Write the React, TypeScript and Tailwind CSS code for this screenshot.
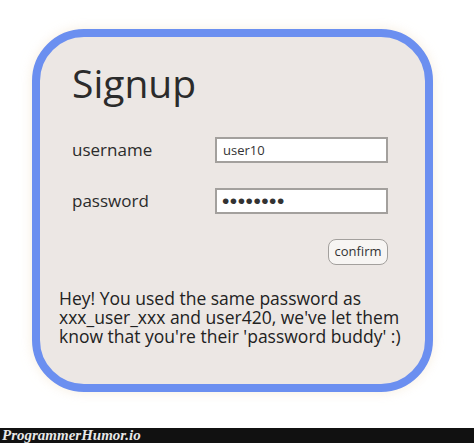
import { useState } from "react";

const font = { fontFamily: '"Open Sans", "Noto Sans", sans-serif' };

export default function App() {
  const [username, setUsername] = useState("user10");
  const [password, setPassword] = useState("hunter22");

  return (
    <div className="flex h-[443px] w-[474px] flex-col bg-white" style={font}>
      {/* Signup card */}
      <div className="ml-[32px] mt-[29px] h-[363px] w-[401px] rounded-[52px] border-[8px] border-[#6b8ff0] bg-[#ece7e4] shadow-[0_0_12px_rgba(240,225,200,0.6)]">
        <h1 className="ml-[32px] mt-[22px] text-[39px] leading-[48px] text-[#2b2b2b]">Signup</h1>

        <div className="mt-[30px] ml-[32px] flex flex-col gap-[25px]">
          <div className="flex h-[26px] items-center">
            <label className="w-[143px] text-[17px] text-[#2b2b2b]">username</label>
            <input
              value={username}
              onChange={(e) => setUsername(e.target.value)}
              className="h-[26px] w-[173px] border-2 border-[#a3a09d] bg-white px-[6px] text-[13px] text-[#333] outline-none"
            />
          </div>
          <div className="flex h-[26px] items-center">
            <label className="w-[143px] text-[17px] text-[#2b2b2b]">password</label>
            <input
              type="password"
              value={password}
              onChange={(e) => setPassword(e.target.value)}
              className="h-[26px] w-[173px] border-2 border-[#a3a09d] bg-white px-[5px] text-[21px] tracking-[0.5px] text-[#333] outline-none"
              style={{ fontFamily: '"Liberation Sans", sans-serif' }}
            />
          </div>
        </div>

        <div className="mr-[37px] mt-[25px] flex justify-end">
          <button className="h-[26px] w-[60px] rounded-[8px] border border-[#a3a09d] bg-[#f7f5f3] text-[13px] text-[#333]">
            confirm
          </button>
        </div>

        <p className="ml-[19px] mt-[24px] text-[17.5px] leading-[19px] text-[#222]">
          Hey! You used the same password as
          <br />
          xxx_user_xxx and user420, we've let them
          <br />
          know that you're their 'password buddy' :)
        </p>
      </div>

      {/* watermark strip */}
      <div className="mt-auto flex h-[15px] items-center bg-[#111] px-[2px]">
        <span
          className="text-[15px] font-bold italic leading-none text-[#e8e8e8]"
          style={{ fontFamily: '"Liberation Serif", serif' }}
        >
          ProgrammerHumor.io
        </span>
      </div>
    </div>
  );
}
